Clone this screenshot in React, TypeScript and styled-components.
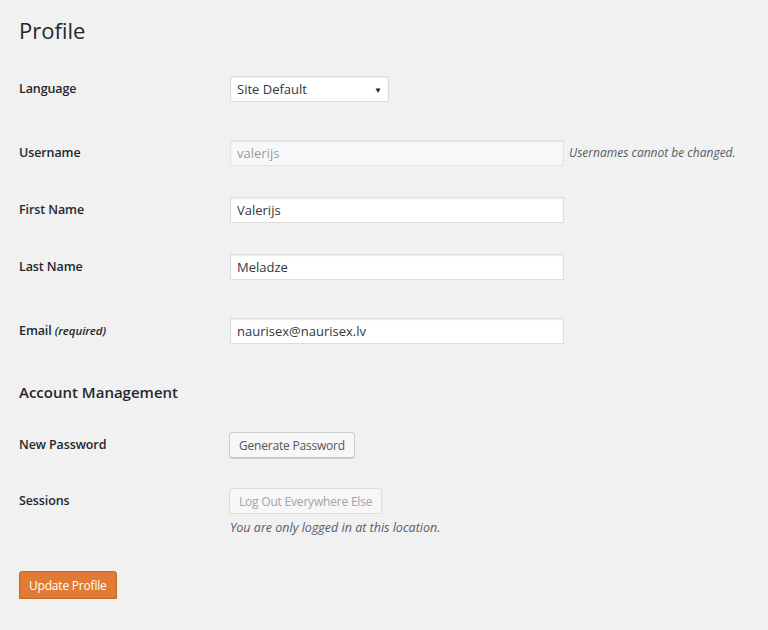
import styled, { createGlobalStyle } from 'styled-components';

const Global = createGlobalStyle`
  body {
    margin: 0;
    background: #f1f1f1;
    font-family: "Open Sans", "Noto Sans", sans-serif;
    color: #23282d;
  }
`;

export default function App() {
  return (
    <_Page>
      <Global />
      <_Title>Profile</_Title>

      <_Row $h={64}>
        <_Label>Language</_Label>
        <_Select>
          <span>Site Default</span>
          <_Arrow>▼</_Arrow>
        </_Select>
      </_Row>

      <_Row $h={57}>
        <_Label>Username</_Label>
        <_Input value="valerijs" disabled readOnly />
        <_Note>Usernames cannot be changed.</_Note>
      </_Row>

      <_Row $h={57}>
        <_Label>First Name</_Label>
        <_Input defaultValue="Valerijs" />
      </_Row>

      <_Row $h={64}>
        <_Label>Last Name</_Label>
        <_Input defaultValue="Meladze" />
      </_Row>

      <_Row $h={64}>
        <_Label>
          Email <em>(required)</em>
        </_Label>
        <_Input defaultValue="naurisex@naurisex.lv" />
      </_Row>

      <_Heading>Account Management</_Heading>

      <_Row $h={56}>
        <_Label>New Password</_Label>
        <_Button>Generate Password</_Button>
      </_Row>

      <_Row $h={83}>
        <_Label>Sessions</_Label>
        <_Field>
          <_Button disabled>Log Out Everywhere Else</_Button>
          <_Desc>You are only logged in at this location.</_Desc>
        </_Field>
      </_Row>

      <_Primary>Update Profile</_Primary>
    </_Page>
  );
}

const _Page = styled.div`
  padding: 0 19px;
  font-size: 13px;
`;

const _Title = styled.h1`
  margin: 0;
  height: 76px;
  padding-top: 16px;
  box-sizing: border-box;
  font-size: 22px;
  font-weight: 400;
  line-height: 29px;
`;

const _Row = styled.div<{ $h: number }>`
  display: flex;
  align-items: flex-start;
  height: ${({ $h }) => $h}px;
`;

const _Label = styled.div`
  width: 211px;
  flex-shrink: 0;
  line-height: 26px;
  font-weight: 600;
  font-size: 12.5px;
  letter-spacing: -0.1px;
  em {
    font-size: 11.5px;
  }
`;

const _Select = styled.div`
  width: 159px;
  height: 26px;
  box-sizing: border-box;
  display: flex;
  align-items: center;
  justify-content: space-between;
  padding: 0 6px;
  background: #fff;
  border: 1px solid #ddd;
  box-shadow: inset 0 1px 2px rgba(0, 0, 0, 0.07);
  color: #32373c;
`;

const _Arrow = styled.span`
  font-size: 8px;
  color: #222;
`;

const _Input = styled.input`
  width: 334px;
  height: 26px;
  box-sizing: border-box;
  margin: 0;
  padding: 0 6px;
  font: inherit;
  color: #32373c;
  background: #fff;
  border: 1px solid #ddd;
  box-shadow: inset 0 1px 2px rgba(0, 0, 0, 0.07);
  &:disabled {
    background: rgba(255, 255, 255, 0.5);
    border-color: rgba(222, 222, 222, 0.75);
    color: rgba(51, 51, 51, 0.5);
  }
`;

const _Note = styled.span`
  margin-left: 5px;
  line-height: 26px;
  font-style: italic;
  font-size: 12px;
  color: #555d66;
`;

const _Heading = styled.h2`
  margin: 0;
  height: 50px;
  font-size: 15px;
  font-weight: 600;
  line-height: 20px;
`;

const _Field = styled.div`
  display: flex;
  flex-direction: column;
  gap: 5px;
`;

const _Button = styled.button`
  height: 26px;
  margin-left: -1px;
  align-self: flex-start;
  padding: 0 9px;
  font: inherit;
  font-size: 12px;
  letter-spacing: -0.2px;
  color: #555;
  background: #f7f7f7;
  border: 1px solid #ccc;
  border-radius: 3px;
  box-shadow: 0 1px 0 #ccc;
  &:disabled {
    color: #a0a5aa;
    background: #f7f7f7;
    border-color: #ddd;
    box-shadow: none;
  }
`;

const _Desc = styled.p`
  margin: 0;
  font-style: italic;
  font-size: 12.5px;
  color: #555d66;
`;

const _Primary = styled.button`
  height: 28px;
  padding: 0 9px;
  font: inherit;
  font-size: 12px;
  letter-spacing: -0.2px;
  color: #fff;
  background: #e07b35;
  border: 1px solid #c5692a;
  border-radius: 3px;
  box-shadow: 0 1px 0 #b35e22;
`;
